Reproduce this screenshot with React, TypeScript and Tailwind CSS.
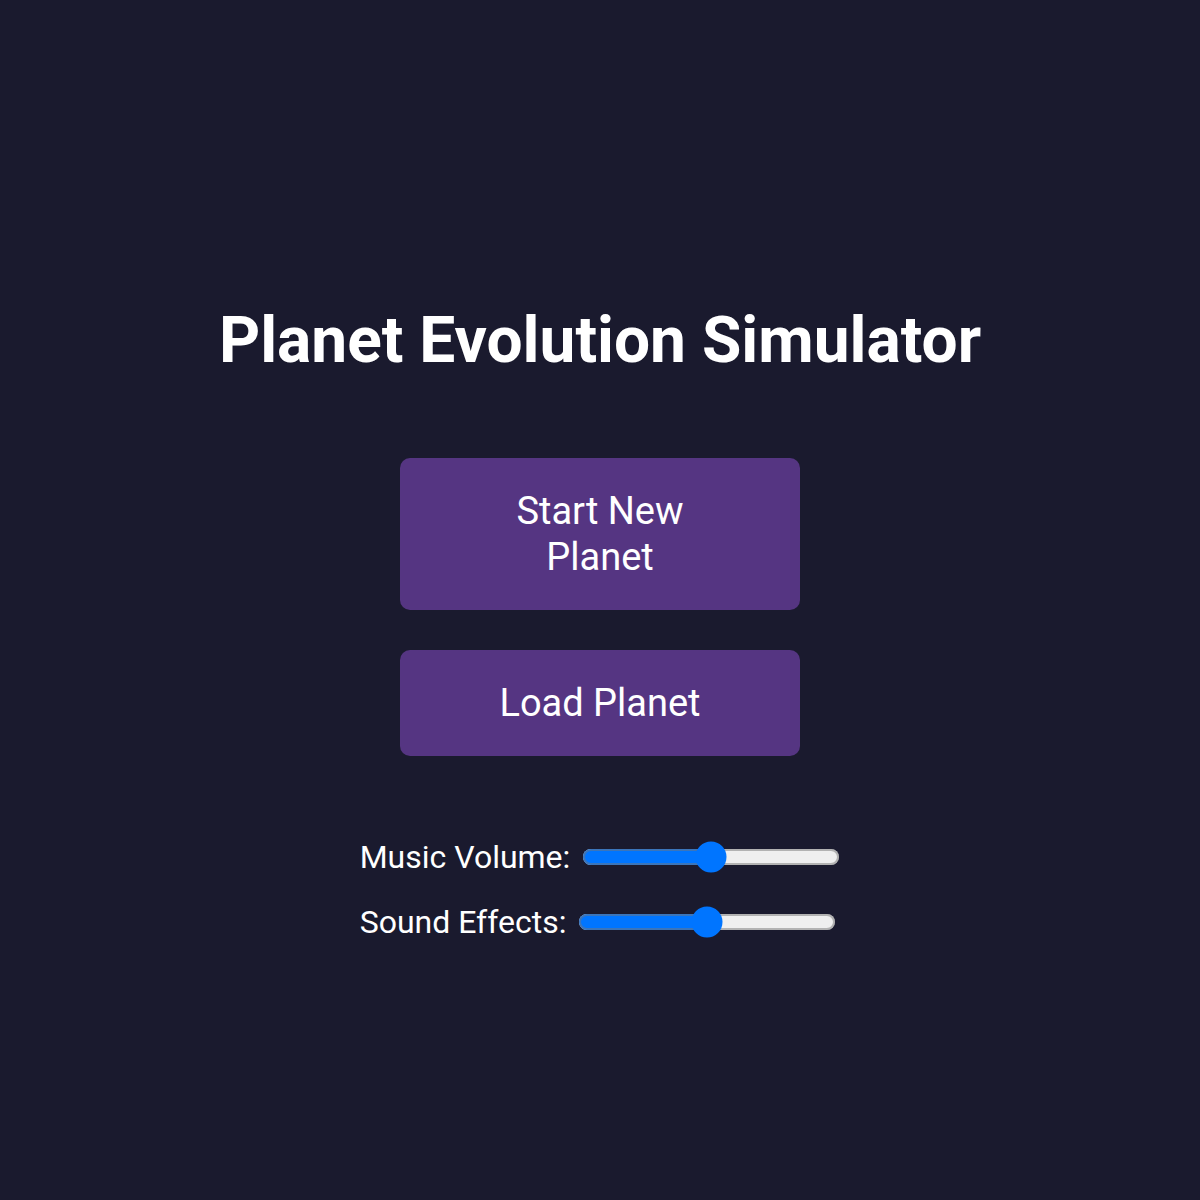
import { useState } from "react";

const VolumeRow = ({ label, value, onChange }: { label: string; value: number; onChange: (v: number) => void }) => {
    return (
        <div className="flex items-center h-[40px]">
            <label className="text-[32px] leading-[38px] text-white mr-[12px]">{label}</label>
            <input
                type="range"
                min={0}
                max={100}
                value={value}
                onChange={(e) => onChange(Number(e.target.value))}
                className="[zoom:2]"
            />
        </div>
    );
};

const App = () => {
    const [music, setMusic] = useState(50);
    const [sfx, setSfx] = useState(50);

    return (
        <div
            className="min-h-screen w-full bg-[#1a1a2e] flex flex-col items-center pt-[303px]"
            style={{ fontFamily: "Roboto, 'Noto Sans', sans-serif" }}
        >
            <h1 className="text-[64px] leading-[75px] font-bold text-white">Planet Evolution Simulator</h1>

            <div className="flex flex-col items-center gap-[40px] mt-[80px]">
                <button className="w-[400px] px-[80px] py-[30px] rounded-[10px] bg-[#553582] text-white text-[38px] leading-[46px]">
                    Start New Planet
                </button>
                <button className="w-[400px] px-[80px] py-[30px] rounded-[10px] bg-[#553582] text-white text-[38px] leading-[46px]">
                    Load Planet
                </button>
            </div>

            <div className="flex flex-col items-start gap-[25px] mt-[81px]">
                <VolumeRow label="Music Volume:" value={music} onChange={setMusic} />
                <VolumeRow label="Sound Effects:" value={sfx} onChange={setSfx} />
            </div>
        </div>
    );
};

export default App;
